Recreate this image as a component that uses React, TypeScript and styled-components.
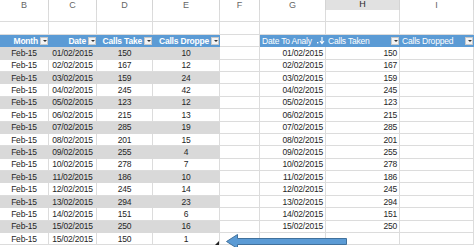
import { createGlobalStyle, styled } from 'styled-components'

const GlobalStyle = createGlobalStyle`
  html, body {
    margin: 0;
    padding: 0;
    background: #fff;
    overflow: hidden;
  }
  * {
    box-sizing: border-box;
  }
`

const COLS = '49px 48px 56px 67px 40px 66px 74px 1fr'
const GRID = '#dcdcdc'
const BAND = '#d9d9d9'
const BLUE = '#5b9bd5'

const Stage = styled.div`
  position: relative;
  width: 474px;
  height: 247px;
  overflow: hidden;
  font-family: 'Liberation Sans', Arial, sans-serif;
  font-size: 8.5px;
  letter-spacing: -0.2px;
  color: #262626;
`

const Row = styled.div<{ $h?: number }>`
  display: grid;
  grid-template-columns: ${COLS};
  height: ${({ $h }) => $h ?? 12.4}px;
`

const Letter = styled.div<{ $sel?: boolean }>`
  display: flex;
  align-items: flex-end;
  justify-content: center;
  font-size: 9px;
  line-height: 9px;
  letter-spacing: 0;
  color: ${({ $sel }) => ($sel ? '#2b2b2b' : '#666')};
  background: ${({ $sel }) => ($sel ? '#e1e1e1' : '#fff')};
  border-right: 1px solid #d4d4d4;
  border-bottom: ${({ $sel }) => ($sel ? '2px solid #217346' : '1px solid #c6c6c6')};
  padding-bottom: 1px;
`

const Cell = styled.div<{ $fill?: string; $align?: 'left' | 'center' | 'right' }>`
  display: flex;
  align-items: center;
  justify-content: ${({ $align }) =>
    $align === 'right' ? 'flex-end' : $align === 'center' ? 'center' : 'flex-start'};
  padding: 0 2px;
  background: ${({ $fill }) => $fill ?? '#fff'};
  border-right: 1px solid ${({ $fill }) => $fill ?? GRID};
  border-bottom: 1px solid ${({ $fill }) => $fill ?? GRID};
  white-space: nowrap;
`

const HeadCell = styled.div<{ $bold?: boolean; $left?: boolean }>`
  display: flex;
  align-items: center;
  justify-content: ${({ $left }) => ($left ? 'space-between' : 'flex-end')};
  gap: 2px;
  padding: 0 1px 0 2px;
  background: ${BLUE};
  color: #fff;
  font-weight: ${({ $bold }) => ($bold ? 700 : 400)};
  white-space: nowrap;
`

const Drop = styled.span`
  position: relative;
  flex: none;
  width: 8px;
  height: 8px;
  background: #f4f4f4;
  border: 1px solid #c9c9c9;
  &::after {
    content: '';
    position: absolute;
    left: 1.5px;
    top: 2.5px;
    border-left: 2px solid transparent;
    border-right: 2px solid transparent;
    border-top: 2px solid #333;
  }
`

const SortIcon = () => (
  <svg width="10" height="9" viewBox="0 0 10 9" style={{ flex: 'none' }}>
    <path d="M7 1v6M5 5l2 2.5L9 5" stroke="#fff" strokeWidth="1.1" fill="none" />
    <rect x="2" y="6" width="1.4" height="1.4" fill="#fff" />
  </svg>
)

const Arrow = styled.svg`
  position: absolute;
  left: 225px;
  top: 233px;
`

const Handle = styled.div`
  position: absolute;
  left: 215px;
  top: 241px;
  width: 0;
  height: 0;
  border-left: 4px solid transparent;
  border-bottom: 4px solid #222;
`

const dataRows = [
  ['01/02/2015', 150, 10],
  ['02/02/2015', 167, 12],
  ['03/02/2015', 159, 24],
  ['04/02/2015', 245, 42],
  ['05/02/2015', 123, 12],
  ['06/02/2015', 215, 13],
  ['07/02/2015', 285, 19],
  ['08/02/2015', 201, 15],
  ['09/02/2015', 255, 4],
  ['10/02/2015', 278, 7],
  ['11/02/2015', 186, 10],
  ['12/02/2015', 245, 14],
  ['13/02/2015', 294, 23],
  ['14/02/2015', 151, 6],
  ['15/02/2015', 250, 16],
  ['15/02/2015', 150, 1],
] as const

const letters = ['B', 'C', 'D', 'E', 'F', 'G', 'H', 'I']

function EmptyRow() {
  return (
    <Row>
      {letters.map((l) => (
        <Cell key={l} />
      ))}
    </Row>
  )
}

export default function App() {
  return (
    <>
      <GlobalStyle />
      <Stage>
        <Row $h={10}>
          {letters.map((l) => (
            <Letter key={l} $sel={l === 'H'}>
              {l}
            </Letter>
          ))}
        </Row>
        <EmptyRow />
        <EmptyRow />
        <Row>
          <HeadCell $bold>
            <span>Month</span>
            <Drop />
          </HeadCell>
          <HeadCell $bold>
            <span>Date</span>
            <Drop />
          </HeadCell>
          <HeadCell $bold>
            <span>Calls Take</span>
            <Drop />
          </HeadCell>
          <HeadCell $bold>
            <span>Calls Droppe</span>
            <Drop />
          </HeadCell>
          <Cell />
          <HeadCell $left>
            <span>Date To Analy</span>
            <SortIcon />
          </HeadCell>
          <HeadCell $left>
            <span>Calls Taken</span>
            <Drop />
          </HeadCell>
          <HeadCell $left>
            <span>Calls Dropped</span>
            <Drop />
          </HeadCell>
        </Row>
        {dataRows.map(([date, taken, dropped], i) => {
          const fill = i % 2 === 0 ? BAND : undefined
          const inTable2 = i < 15
          return (
            <Row key={i}>
              <Cell $fill={fill} $align="center">
                Feb-15
              </Cell>
              <Cell $fill={fill} $align="center">
                {date}
              </Cell>
              <Cell $fill={fill} $align="center">
                {taken}
              </Cell>
              <Cell $fill={fill} $align="center">
                {dropped}
              </Cell>
              <Cell />
              <Cell $align="right">{inTable2 ? date : ''}</Cell>
              <Cell $align="right">{inTable2 ? taken : ''}</Cell>
              <Cell />
            </Row>
          )
        })}
        <Handle />
        <Arrow width="124" height="16" viewBox="0 0 124 16">
          <path
            d="M1.5 8.5 L12.5 1.5 V5.5 H121.5 V11.5 H12.5 V15.5 Z"
            fill="#5b9bd5"
            stroke="#41719c"
            strokeWidth="1"
          />
        </Arrow>
      </Stage>
    </>
  )
}
